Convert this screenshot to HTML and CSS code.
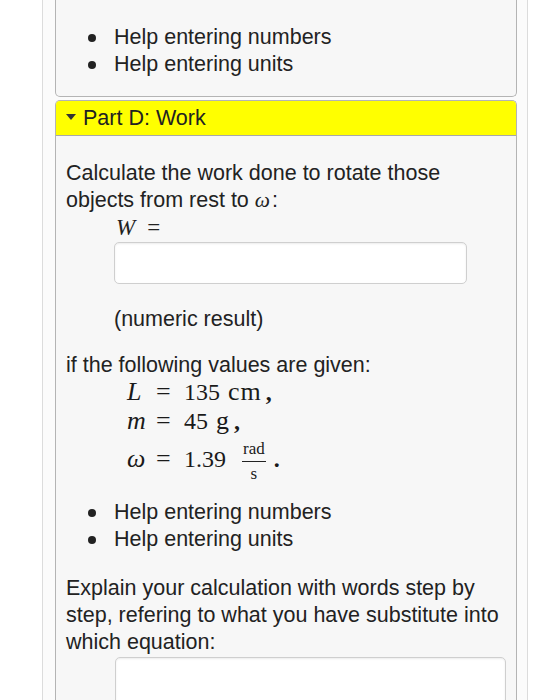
FILE: index.html
```html
<!DOCTYPE html>
<html>
<head>
<meta charset="utf-8">
<link rel="stylesheet" href="styles.css">
</head>
<body>
<div class="page">
  <div class="panel panel-top">
    <ul class="help">
      <li>Help entering numbers</li>
      <li>Help entering units</li>
    </ul>
  </div>
  <div class="panel panel-part">
    <div class="part-head"><span class="caret"></span>Part D: Work</div>
    <div class="part-body">
      <p class="text">Calculate the work done to rotate those<br>objects from rest to <span class="mi omega">ω</span>:</p>
      <div class="indent">
        <div class="wline"><span class="mi">W</span><span class="mo">=</span></div>
        <div class="answer"></div>
        <div class="note">(numeric result)</div>
      </div>
      <p class="text given">if the following values are given:</p>
      <div class="values">
        <div class="row"><span class="lhs mi">L</span><span class="eq">=</span><span class="rhs">135<span class="unit">cm</span><span class="punct">,</span></span></div>
        <div class="row"><span class="lhs mi">m</span><span class="eq">=</span><span class="rhs">45<span class="unit">g</span><span class="punct">,</span></span></div>
        <div class="row row-frac"><span class="lhs mi">ω</span><span class="eq">=</span><span class="rhs">1.39<span class="frac"><span class="num">rad</span><span class="den">s</span></span><span class="punct dot">.</span></span></div>
      </div>
      <ul class="help help-mid">
        <li>Help entering numbers</li>
        <li>Help entering units</li>
      </ul>
      <p class="text explain">Explain your calculation with words step by<br>step, refering to what you have substitute into<br>which equation:</p>
      <div class="essay"></div>
    </div>
  </div>
</div>
</body>
</html>
```
FILE: styles.css
```css
html, body {
  margin: 0;
  padding: 0;
  background: #ffffff;
  height: 700px;
  overflow: hidden;
}
body {
  font-family: "Liberation Sans", Arial, sans-serif;
  font-size: 21.5px;
  color: #222222;
}
.page {
  margin-left: 42px;
  width: 462px;
  padding: 0 10px 0 12px;
  border-left: 1px solid #dcdcdc;
  border-right: 1px solid #dcdcdc;
  background: #fbfbfb;
  min-height: 700px;
}
.panel {
  background: #f7f7f7;
  border: 1px solid #b4b4b4;
}
.panel-top {
  border-top: none;
  border-radius: 0 0 5px 5px;
  padding: 24px 0 18px 0;
}
.help {
  margin: 0;
  padding: 0 0 0 58px;
  line-height: 27px;
  list-style: none;
}
.help li {
  position: relative;
  white-space: nowrap;
}
.help li::before {
  content: "";
  position: absolute;
  left: -26px;
  top: 10px;
  width: 8px;
  height: 8px;
  border-radius: 50%;
  background: #222;
}
.panel-part {
  margin-top: 3px;
  border-radius: 5px 5px 0 0;
  border-bottom: none;
}
.part-head {
  background: #ffff00;
  height: 34px;
  border-bottom: 1px solid #a8a8a8;
  border-radius: 4px 4px 0 0;
  padding-left: 10px;
  display: flex;
  align-items: center;
  color: #222;
}
.caret {
  width: 0;
  height: 0;
  border-left: 5px solid transparent;
  border-right: 5px solid transparent;
  border-top: 6px solid #333;
  margin-right: 7px;
  margin-top: -3px;
}
.part-body {
  padding: 24px 5px 0 10px;
}
.text {
  margin: 0;
  line-height: 27px;
  white-space: nowrap;
}
.mi {
  font-family: "Liberation Serif", "Times New Roman", serif;
  font-style: italic;
}
.omega {
  margin-right: 2px;
}
.indent {
  margin-left: 48px;
}
.wline {
  font-family: "Liberation Serif", serif;
  font-size: 23px;
  line-height: 27px;
  padding-left: 2px;
}
.wline .mo {
  margin-left: 12px;
}
.answer {
  margin-top: 1px;
  width: 351px;
  height: 40px;
  background: #ffffff;
  border: 1px solid #cfcfcf;
  border-radius: 5px;
  box-shadow: inset 0 1px 2px rgba(0,0,0,0.08);
}
.note {
  margin-top: 22px;
  line-height: 27px;
}
.given {
  margin-top: 19px;
}
.values {
  margin-top: -2px;
  margin-left: 61px;
  font-family: "Liberation Serif", "Times New Roman", serif;
  font-size: 24px;
  color: #1a1a1a;
}
.row {
  display: flex;
  align-items: baseline;
  line-height: 29px;
  height: 29px;
}
.row-frac {
  margin-top: 7px;
}
.lhs {
  width: 29px;
  font-size: 26px;
}
.eq {
  width: 28px;
  font-size: 26px;
}
.unit {
  margin-left: 8px;
  letter-spacing: 1px;
  font-size: 26px;
}
.punct {
  margin-left: 4px;
  font-weight: bold;
}
.frac {
  display: inline-block;
  vertical-align: -12px;
  margin-left: 16px;
  font-size: 17px;
  text-align: center;
}
.num {
  display: block;
  line-height: 14px;
  padding: 0 1px 5px;
  border-bottom: 1px solid #222;
}
.den {
  display: block;
  line-height: 14px;
  padding-top: 5px;
}
.dot {
  margin-left: 8px;
}
.help-mid {
  margin-top: 28px;
  padding-left: 48px;
}
.explain {
  margin-top: 22px;
}
.essay {
  margin-top: 1px;
  margin-left: 49px;
  width: 389px;
  height: 80px;
  background: #ffffff;
  border: 1px solid #cfcfcf;
  border-radius: 5px;
  box-shadow: inset 0 1px 2px rgba(0,0,0,0.08);
}
```
